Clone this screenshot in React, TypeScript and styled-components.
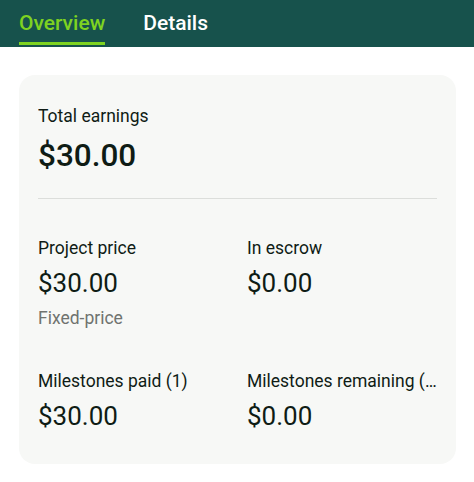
import styled, { createGlobalStyle } from "styled-components";

const GlobalStyle = createGlobalStyle`
  html, body {
    margin: 0;
    padding: 0;
    background: #ffffff;
    font-family: Roboto, "Noto Sans", sans-serif;
    color: #0f1c15;
  }
`;

const TabBar = styled.div`
  display: flex;
  gap: 38px;
  height: 47px;
  padding: 0 0 0 19px;
  background: #17524c;
  box-sizing: border-box;
`;

type TabProps = {
  active?: boolean;
};

const Tab = styled.div<TabProps>`
  display: flex;
  align-items: flex-start;
  padding-top: 11px;
  font-size: 21px;
  font-weight: 500;
  color: ${(props) => (props.active ? "#7ed321" : "#ffffff")};
  border-bottom: 3px solid
    ${(props) => (props.active ? "#7ed321" : "transparent")};
  height: 45px;
  box-sizing: border-box;
  margin-bottom: 2px;
`;

const Page = styled.div`
  padding: 28px 18px 18px 19px;
`;

const Card = styled.div`
  background: #f7f8f6;
  border-radius: 16px;
  padding: 30px 19px 33px 19px;
`;

const Summary = styled.div`
  padding-bottom: 24px;
  border-bottom: 1px solid #dcdedb;
`;

const Label = styled.div`
  font-size: 17.5px;
  line-height: 22px;
  color: #0f1c15;
  white-space: nowrap;
  overflow: hidden;
  text-overflow: ellipsis;
`;

const TotalValue = styled.div`
  margin-top: 10px;
  font-size: 31.5px;
  line-height: 37px;
  font-weight: 500;
  color: #0f1c15;
`;

const Grid = styled.div`
  display: grid;
  grid-template-columns: 209px minmax(0, 1fr);
  row-gap: 41px;
  padding-top: 38px;
`;

const Cell = styled.div`
  display: flex;
  flex-direction: column;
  min-width: 0;
`;

const Value = styled.div`
  margin-top: 9px;
  font-size: 26px;
  line-height: 30px;
  color: #0f1c15;
`;

const Note = styled.div`
  margin-top: 9px;
  font-size: 17.5px;
  line-height: 22px;
  color: #6f736f;
`;

const stats = [
  { label: "Project price", value: "$30.00", note: "Fixed-price" },
  { label: "In escrow", value: "$0.00" },
  { label: "Milestones paid (1)", value: "$30.00" },
  { label: "Milestones remaining (1)", value: "$0.00" },
];

export default function App() {
  return (
    <>
      <GlobalStyle />
      <TabBar>
        <Tab active>Overview</Tab>
        <Tab>Details</Tab>
      </TabBar>
      <Page>
        <Card>
          <Summary>
            <Label>Total earnings</Label>
            <TotalValue>$30.00</TotalValue>
          </Summary>
          <Grid>
            {stats.map((s) => (
              <Cell key={s.label}>
                <Label>{s.label}</Label>
                <Value>{s.value}</Value>
                {s.note && <Note>{s.note}</Note>}
              </Cell>
            ))}
          </Grid>
        </Card>
      </Page>
    </>
  );
}
